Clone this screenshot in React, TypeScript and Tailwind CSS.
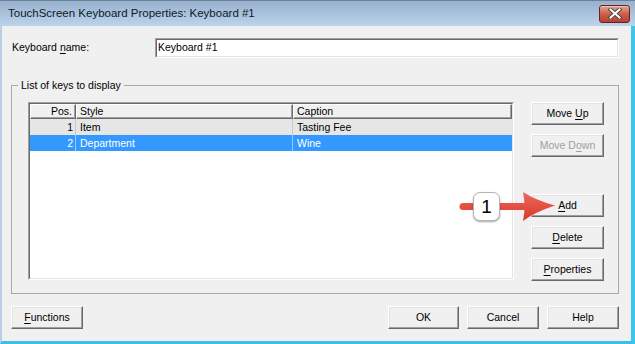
import type { ReactNode } from 'react';

const ui = "font-['Liberation_Sans',Arial,sans-serif]";

function WinButton({
  children,
  className = '',
  disabled = false,
}: {
  children: ReactNode;
  className?: string;
  disabled?: boolean;
}) {
  return (
    <button
      type="button"
      className={`flex h-[23px] items-center justify-center border border-t-white border-l-white border-r-[#696969] border-b-[#696969] bg-[#f0f0f0] text-[10.5px] font-normal leading-none shadow-[inset_-1px_-1px_0_#a0a0a0,inset_1px_1px_0_#e3e3e3] ${
        disabled ? 'text-[#a0a0a0]' : 'text-black'
      } ${className}`}
    >
      {children}
    </button>
  );
}

function U({ children }: { children: ReactNode }) {
  return <span className="underline underline-offset-2">{children}</span>;
}

function CloseButton() {
  return (
    <div className="flex h-[18px] w-[31px] items-center justify-center rounded-[3px] border border-[#5e2622] bg-linear-to-b from-[#e4a593] via-[#cd5d4a] to-[#b8412f] shadow-[inset_0_1px_0_#f0c2b4]">
      <svg width="14" height="11" viewBox="0 0 14 11">
        <path d="M2.5 1.5 L11.5 9.5 M11.5 1.5 L2.5 9.5" stroke="#4a4a4a" strokeWidth="4" strokeLinecap="square" />
        <path d="M2.5 1.5 L11.5 9.5 M11.5 1.5 L2.5 9.5" stroke="#ffffff" strokeWidth="2" strokeLinecap="square" />
      </svg>
    </div>
  );
}

const headerCell =
  'flex items-center border-t border-l border-t-white border-l-white border-r border-b border-r-[#696969] border-b-[#696969] bg-[#f0f0f0] shadow-[inset_-1px_-1px_0_#a0a0a0] text-[10.5px] leading-none text-black';

const rows = [
  { pos: '1', style: 'Item', caption: 'Tasting Fee', selected: false },
  { pos: '2', style: 'Department', caption: 'Wine', selected: true },
];

function KeyTable() {
  return (
    <div className="h-[178px] w-[486px] border border-t-[#a0a0a0] border-l-[#a0a0a0] border-r-white border-b-white">
      <div className="flex h-full flex-col border border-t-[#696969] border-l-[#696969] border-r-[#e3e3e3] border-b-[#e3e3e3] bg-white">
        <div className="flex h-[15px]">
          <div className={`${headerCell} w-[46px] justify-end pr-[3px]`}>Pos.</div>
          <div className={`${headerCell} w-[217px] pl-[3px]`}>Style</div>
          <div className={`${headerCell} flex-1 pl-[3px]`}>Caption</div>
        </div>
        {rows.map((r) => (
          <div
            key={r.pos}
            className={`flex h-[16px] text-[10.5px] leading-none ${
              r.selected ? 'bg-[#3399ff] text-white' : 'bg-[#e6e6e6] text-black'
            }`}
          >
            <div
              className={`flex w-[46px] items-center justify-end border-r pr-[2px] ${
                r.selected ? 'border-r-[#99c9f9]' : 'border-r-[#c9c9c9]'
              }`}
            >
              {r.pos}
            </div>
            <div
              className={`flex w-[217px] items-center border-r pl-[4px] ${
                r.selected ? 'border-r-[#99c9f9]' : 'border-r-[#c9c9c9]'
              }`}
            >
              {r.style}
            </div>
            <div className="flex flex-1 items-center pl-[4px]">{r.caption}</div>
          </div>
        ))}
      </div>
    </div>
  );
}

export default function App() {
  return (
    <div className={`relative flex h-[344px] w-[635px] flex-col overflow-hidden bg-[#f0f0f0] ${ui}`}>
      <div className="flex h-[26px] items-center justify-between border-t border-t-[#6b7f95] bg-linear-to-b from-[#97b1ce] to-[#bcd3eb] pl-[8px] pr-[5px]">
        <span className="text-[11.5px] text-[#101a24]">TouchScreen Keyboard Properties: Keyboard #1</span>
        <CloseButton />
      </div>

      <div className="flex flex-1 flex-col border-l-2 border-r-[4px] border-b-[3px] border-l-[#b9cfe6] border-r-[#3fc4ee] border-b-[#37c2ed]">
        <div className="mt-[12px] flex h-[20px] items-center pl-[10px]">
          <label className="w-[143px] text-[10.5px] text-black">
            Keyboard <U>n</U>ame:
          </label>
          <div className="h-[20px] w-[464px] border border-t-[#a0a0a0] border-l-[#a0a0a0] border-r-white border-b-white">
            <div className="flex h-full items-center border border-t-[#696969] border-l-[#696969] border-r-[#e3e3e3] border-b-[#e3e3e3] bg-white pl-[1px] text-[10.5px] text-black">
              Keyboard #1
            </div>
          </div>
        </div>

        <fieldset className="mt-[20px] ml-[9px] h-[216px] w-[608px] border border-[#a9a9a9] pl-[16px] pt-[10px]">
          <legend className="ml-[-10px] px-[3px] text-[10.5px] leading-[14px] text-black">List of keys to display</legend>
          <div className="flex gap-[17px]">
            <KeyTable />
            <div className="flex w-[73px] flex-col">
              <WinButton className="w-[73px]">
                Move&nbsp; <U>U</U>p
              </WinButton>
              <WinButton className="mt-[9px] w-[73px]" disabled>
                Move D<U>o</U>wn
              </WinButton>
              <WinButton className="mt-[37px] w-[73px]">
                <U>A</U>dd
              </WinButton>
              <WinButton className="mt-[9px] w-[73px]">
                <U>D</U>elete
              </WinButton>
              <WinButton className="mt-[9px] w-[73px]">
                <U>P</U>roperties
              </WinButton>
            </div>
          </div>
        </fieldset>

        <div className="mt-[12px] flex pl-[9px] pr-[12px]">
          <WinButton className="w-[72px]">
            <U>F</U>unctions
          </WinButton>
          <div className="ml-auto flex gap-[8px]">
            <WinButton className="w-[71px]">OK</WinButton>
            <WinButton className="w-[72px]">Cancel</WinButton>
            <WinButton className="w-[72px]">Help</WinButton>
          </div>
        </div>
      </div>

      {/* callout pointing at Add */}
      <svg className="absolute left-[455px] top-[186px]" width="105" height="40" viewBox="0 0 105 40">
        <defs>
          <linearGradient id="arr" gradientUnits="userSpaceOnUse" x1="0" y1="6" x2="0" y2="35">
            <stop offset="0" stopColor="#f0675c" />
            <stop offset="1" stopColor="#d8382d" />
          </linearGradient>
        </defs>
        <line x1="8" y1="20.5" x2="72" y2="20.5" stroke="url(#arr)" strokeWidth="7" strokeLinecap="round" />
        <path d="M68 6 Q80 14 100 19.5 Q80 26 68 35 Q71 20.5 68 6 Z" fill="url(#arr)" />
      </svg>
      <div className="absolute left-[473px] top-[192px] flex h-[29px] w-[27px] items-center justify-center rounded-[7px] border border-[#b5b5b5] bg-white text-[19px] leading-none text-black shadow-[0_1px_2px_rgba(0,0,0,0.35)]">
        1
      </div>
    </div>
  );
}
